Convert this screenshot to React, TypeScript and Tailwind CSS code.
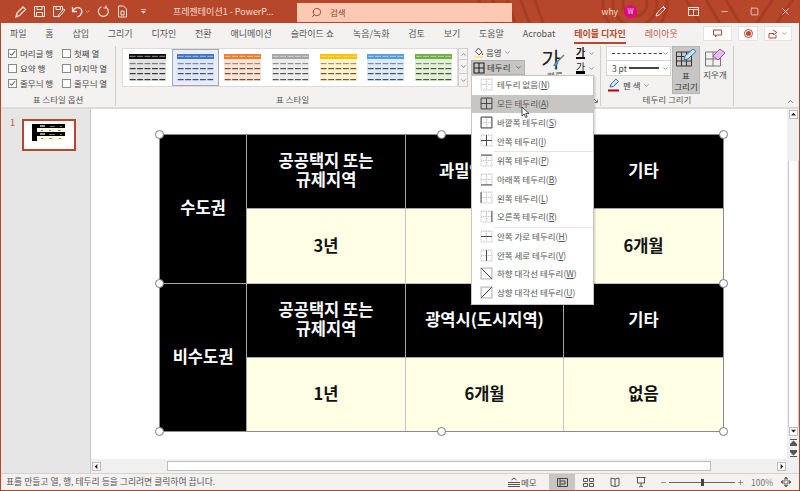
import React from "react";
import { ChevronDown, ChevronUp, Minus, Plus, Search, Square, X } from "lucide-react";

const FONT = "[font-family:'Noto_Sans_CJK_KR','Noto_Sans',sans-serif]";

const TABS = ["파일", "홈", "삽입", "그리기", "디자인", "전환", "애니메이션", "슬라이드 쇼", "녹음/녹화", "검토", "보기", "도움말", "Acrobat"];

const STYLES = [
  { head: "#111111", tint: "#e2e2e2", line: "#222222" },
  { head: "#4472c4", tint: "#dfe5f3", line: "#2f4266" },
  { head: "#ed7d31", tint: "#fbe3d4", line: "#5c4030" },
  { head: "#a5a5a5", tint: "#ededed", line: "#444444" },
  { head: "#ffc000", tint: "#fff2cc", line: "#55492a" },
  { head: "#5b9bd5", tint: "#deebf7", line: "#2d4256" },
  { head: "#70ad47", tint: "#e2efd9", line: "#35472a" },
];

// which edges are dark in each border menu icon
const MENU = [
  { label: "테두리 없음", key: "N", d: "" },
  { label: "모든 테두리", key: "A", d: "M1 1h10v10H1zM6 1v10M1 6h10", active: true },
  { label: "바깥쪽 테두리", key: "S", d: "M1 1h10v10H1z" },
  { label: "안쪽 테두리", key: "I", d: "M6 1v10M1 6h10", sep: true },
  { label: "위쪽 테두리", key: "P", d: "M1 1h10" },
  { label: "아래쪽 테두리", key: "B", d: "M1 11h10" },
  { label: "왼쪽 테두리", key: "L", d: "M1 1v10" },
  { label: "오른쪽 테두리", key: "R", d: "M11 1v10", sep: true },
  { label: "안쪽 가로 테두리", key: "H", d: "M1 6h10" },
  { label: "안쪽 세로 테두리", key: "V", d: "M6 1v10" },
  { label: "하향 대각선 테두리", key: "W", d: "M1 1l10 10", plain: true },
  { label: "상향 대각선 테두리", key: "U", d: "M1 11L11 1", plain: true },
];

const BorderIcon = ({ d, plain }: { d: string; plain?: boolean }) => (
  <svg width="13" height="13" viewBox="0 0 12 12" fill="none">
    {plain ? (
      <rect x="1" y="1" width="10" height="10" stroke="#b0b0b0" />
    ) : (
      <path d="M1 1h10v10H1zM6 1v10M1 6h10" stroke="#c4c4c4" strokeDasharray="1 0.6" />
    )}
    {d && <path d={d} stroke="#444444" strokeWidth="0.9" />}
  </svg>
);

const StylePreview = ({ head, tint, line }: { head: string; tint: string; line: string }) => (
  <svg width="37" height="27" viewBox="0 0 37 27">
    <rect width="37" height="27" fill={tint} />
    <rect width="37" height="5" fill={head} />
    {[0, 1, 2, 3, 4].map((c) => (
      <g key={c}>
        <rect x={c * 7.4 + 0.8} y="1.8" width="5.8" height="1.2" fill="#ffffff" opacity="0.45" />
        {[9, 14, 19, 25].map((y) => (
          <rect key={y} x={c * 7.4 + 0.8} y={y} width="5.8" height="1.2" fill={line} opacity={y === 9 ? 0.55 : 0.9} />
        ))}
      </g>
    ))}
  </svg>
);

const Check = ({ label, checked }: { label: string; checked?: boolean }) => (
  <div className="flex items-center gap-[3px] h-[15px]">
    <span className="w-[9px] h-[9px] bg-white border border-[#8a8a8a] flex items-center justify-center">
      {checked && (
        <svg width="7" height="7" viewBox="0 0 7 7" fill="none">
          <path d="M1 3.5l1.6 1.8L6 1.2" stroke="#333" />
        </svg>
      )}
    </span>
    <span className="whitespace-nowrap">{label}</span>
  </div>
);

const Group = ({ label, className, children }: { label?: string; className: string; children: React.ReactNode }) => (
  <div className={`flex flex-col shrink-0 border-r border-[#d0cfcd] my-[1px] ${className}`}>
    <div className="flex-1 min-h-0">{children}</div>
    {label && <div className="h-[13px] leading-[12px] text-center whitespace-nowrap text-[#555]">{label}</div>}
  </div>
);

const Caret = () => <ChevronDown size={7} strokeWidth={2} className="text-[#555] shrink-0" />;

const Handle = ({ className }: { className: string }) => (
  <span className={`absolute w-[9px] h-[9px] rounded-full bg-white border-[1.5px] border-[#7a7a7a] ${className}`} />
);

const HeadCell = ({ children, className = "" }: { children: React.ReactNode; className?: string }) => (
  <div className={`bg-black text-white flex items-center justify-center text-center pb-[3px] border-[#a6a6a6] ${className}`}>
    <span>{children}</span>
  </div>
);

const BodyCell = ({ children, className = "" }: { children: React.ReactNode; className?: string }) => (
  <div className={`bg-[#ffffe5] text-[#111] flex items-center justify-center pb-[2px] border-[#c4c4c4] ${className}`}>{children}</div>
);

const Scroll = ({ dir }: { dir: "up" | "down" | "left" | "right" }) => {
  const pts = { up: "1,5 4,2 7,5", down: "1,2 4,5 7,2", left: "5,1 2,4 5,7", right: "3,1 6,4 3,7" }[dir];
  return (
    <span className="w-[9px] h-[9px] bg-white border border-[#bdbdbd] flex items-center justify-center shrink-0">
      <svg width="7" height="7" viewBox="0 0 8 8">
        <polygon points={pts} fill="#222" />
      </svg>
    </span>
  );
};

const MiniTable = () => (
  <div className="grid grid-cols-[5px_10px_9px_9px] grid-rows-[4px_4px_4px_5px] w-[33px] h-[17px]">
    <div className="bg-black row-span-2" />
    <div className="bg-black col-span-3 flex items-center justify-around px-[1px]">
      <span className="w-[5px] h-[2px] bg-[#999]" />
      <span className="w-[5px] h-[1px] bg-[#777]" />
      <span className="w-[2px] h-[1px] bg-[#777]" />
    </div>
    <div className="bg-[#ffffe5] col-span-3 flex items-center justify-around px-[1px]">
      <span className="w-[2px] h-[1px] bg-[#888]" />
      <span className="w-[2px] h-[1px] bg-[#888]" />
      <span className="w-[3px] h-[1px] bg-[#888]" />
    </div>
    <div className="bg-black row-span-2" />
    <div className="bg-black col-span-3 flex items-center justify-around px-[1px]">
      <span className="w-[5px] h-[2px] bg-[#999]" />
      <span className="w-[6px] h-[1px] bg-[#777]" />
      <span className="w-[2px] h-[1px] bg-[#777]" />
    </div>
    <div className="bg-[#ffffe5] col-span-3 flex items-center justify-around px-[1px]">
      <span className="w-[2px] h-[1px] bg-[#888]" />
      <span className="w-[3px] h-[1px] bg-[#888]" />
      <span className="w-[2px] h-[1px] bg-[#888]" />
    </div>
  </div>
);

export default function App() {
  return (
    <div className={`${FONT} relative w-[800px] h-[491px] overflow-hidden bg-[#b7472a] flex flex-col text-[8.5px] text-[#444]`}>
      {/* title bar */}
      <div className="relative h-[23px] shrink-0 flex items-center text-white overflow-hidden">
        <svg className="absolute right-0 top-0" width="330" height="23" viewBox="0 0 330 23" fill="none" stroke="#a63d22" strokeWidth="3">
          <path d="M8 -2l10 27M22 -2l10 27M36 -2l10 27M50 -2l10 27M64 -2l10 27" />
          <circle cx="165" cy="4" r="12" />
          <circle cx="165" cy="4" r="22" />
          <circle cx="165" cy="4" r="32" />
          <path d="M215 -2l16 27M235 -2l16 27M255 -2l16 27M285 26l20 -30M305 26l20 -30" />
        </svg>
        <div className="relative flex items-center pl-[14px] text-[#fbe3da]">
          <svg width="13" height="14" viewBox="0 0 13 14" fill="none" stroke="currentColor" className="mr-[6px]">
            <path d="M2 12l1-4 6-6 2.500 2.500-6 6zM2 12l3-1.500" strokeWidth="1.300" />
          </svg>
          <svg width="13" height="13" viewBox="0 0 13 13" fill="none" stroke="currentColor" className="mr-[6px]">
            <path d="M1.500 1.500h10v10h-10zM4 1.500v3h5v-3M3.500 11.500v-4h6v4" />
          </svg>
          <svg width="14" height="13" viewBox="0 0 14 13" fill="none" stroke="currentColor" className="mr-[5px]">
            <path d="M6 11.500H1.500v-10h9v4M4 1.500v3h4.500v-3M13 5l-5 6-2 1 .5-2 5-6z" />
          </svg>
          <svg width="12" height="13" viewBox="0 0 12 13" fill="none" stroke="currentColor" strokeWidth="1.300" className="mr-[1px]">
            <path d="M1.500 2v4.500H6M1.500 6.500C3 3 7 1.500 9.500 3.500s1.500 6.500-3 8.500" />
          </svg>
          <ChevronDown size={7} className="mr-[6px]" />
          <svg width="13" height="13" viewBox="0 0 13 13" fill="none" stroke="currentColor" strokeWidth="1.200" className="mr-[7px]">
            <path d="M9 2.200A5 5 0 1 1 4.500 1.800M9 .5v2.500H6.500" />
          </svg>
          <svg width="11" height="13" viewBox="0 0 11 13" fill="none" stroke="currentColor" className="mr-[12px]">
            <path d="M1.500 12V1h5l3 3v8zM4 6h3v4H4z" />
          </svg>
          <svg width="7" height="7" viewBox="0 0 7 7" fill="currentColor">
            <path d="M1 1h5v.8H1zM1 3h5L3.500 5.600z" />
          </svg>
        </div>
        <div className="relative ml-[26px] w-[108px] whitespace-nowrap text-[9px] text-[#f6dcd2]">프레젠테이션1 - PowerP...</div>
        <div className="relative ml-[16px] w-[215px] h-[19px] mt-[1px] bg-[#fdc9b3] flex items-center pl-[14px] text-[#8a4a35]">
          <Search size={11} className="mr-[8px] -scale-x-100" />
          <span>검색</span>
        </div>
        <div className="relative ml-auto flex items-center pr-[9px] text-[#fbe3da]">
          <span className="mr-[6px] text-[8.500px]">why</span>
          <span className="w-[13px] h-[13px] rounded-full bg-[#e3008c] text-[7px] flex items-center justify-center mr-[17px]">W</span>
          <svg width="13" height="13" viewBox="0 0 13 13" fill="none" stroke="currentColor" className="mr-[21px]">
            <path d="M2 11l1-3 6-6 2 2-6 6zM9 1l3 3" />
          </svg>
          <svg width="11" height="9" viewBox="0 0 11 9" fill="none" stroke="currentColor" className="mr-[21px]">
            <path d="M.5.500h10v8H.5zM.5 2.500h10M5.500 2.500v6" />
          </svg>
          <Minus size={9} className="mr-[21px]" />
          <Square size={9} className="mr-[21px]" />
          <X size={11} />
        </div>
      </div>

      {/* ribbon tabs */}
      <div className="mx-[1px] h-[22px] shrink-0 bg-[#f3f2f1] flex items-center pl-[9px] pr-[7px] pb-px text-[#555] relative">
        <div className="flex items-center gap-[18.800px] text-[9px] whitespace-nowrap">
          {TABS.map((t) => (
            <span key={t}>{t}</span>
          ))}
          <span className="relative font-bold text-[#b7472a]">
            테이블 디자인
            <span className="absolute left-0 right-0 -bottom-[4px] h-[2px] bg-[#b7472a]" />
          </span>
          <span className="text-[#c0563c]">레이아웃</span>
        </div>
        <div className="ml-auto flex items-center gap-[6px]">
          <span className="w-[29px] h-[15px] bg-white border border-[#e4e3e1] flex items-center justify-center">
            <svg width="9" height="9" viewBox="0 0 9 9" fill="none" stroke="#b7472a">
              <path d="M.5 1h8v5H4L2.500 8V6h-2z" />
            </svg>
          </span>
          <span className="w-[20px] h-[15px] bg-white border border-[#e4e3e1] flex items-center justify-center">
            <span className="w-[9px] h-[9px] rounded-full border border-[#b7472a] flex items-center justify-center">
              <span className="w-[5px] h-[5px] rounded-full bg-[#c8472a]" />
            </span>
          </span>
          <span className="w-[28px] h-[15px] bg-white border border-[#e4e3e1] flex items-center justify-center gap-[3px]">
            <svg width="10" height="10" viewBox="0 0 10 10" fill="none" stroke="#b7472a">
              <path d="M1 9V4.500h5M1 9h7V6M5 1l4 2.500L5 6" />
            </svg>
            <ChevronDown size={7} className="text-[#b7472a]" />
          </span>
        </div>
      </div>

      {/* ribbon */}
      <div className="mx-[1px] h-[64px] shrink-0 bg-[#f3f2f1] border-b-[2px] border-[#dcdbd9] flex pr-[4px]">
        <Group label="표 스타일 옵션" className="w-[115px]">
          <div className="grid grid-cols-[54px_auto] pl-[7px]">
            <Check label="머리글 행" checked />
            <Check label="첫째 열" />
            <Check label="요약 행" />
            <Check label="마지막 열" />
            <Check label="줄무늬 행" checked />
            <Check label="줄무늬 열" />
          </div>
        </Group>

        <div className="w-[353px] shrink-0 flex flex-col my-[1px]">
          <div className="flex-1 flex pl-[6px] pt-[2px]">
            <div className="w-[336px] h-[39px] bg-white border border-[#dcdbd9] flex items-center pl-[1px]">
              {STYLES.map((s, i) => (
                <div
                  key={s.head}
                  className={`w-[47.700px] h-[37px] flex items-center justify-center ${i === 1 ? "border-[1.500px] border-[#a8a8a8] bg-[#e8edf8]" : ""}`}
                >
                  <StylePreview {...s} />
                </div>
              ))}
            </div>
            <div className="w-[10px] h-[39px] flex flex-col">
              <span className="h-[12px] border border-[#d0cfcd] flex items-center justify-center">
                <ChevronUp size={7} />
              </span>
              <span className="h-[14px] border border-t-0 border-[#d0cfcd] flex items-center justify-center">
                <ChevronDown size={7} />
              </span>
              <span className="h-[13px] border border-t-0 border-[#d0cfcd] flex items-center justify-center">
                <ChevronDown size={7} />
              </span>
            </div>
          </div>
          <div className="h-[13px] leading-[12px] text-center text-[#555]">표 스타일</div>
        </div>

        <Group className="w-[132px] relative">
          <div className="flex pl-[2px]">
            <div className="w-[54px] flex flex-col shrink-0">
              <div className="h-[14px] flex items-center gap-[2px] pl-[2px] pb-[2px]">
                <svg width="11" height="11" viewBox="0 0 11 11" fill="none">
                  <path d="M5.500 1l3.500 4-3 3-3.500-3.500zM9.500 6.500v1.500" stroke="#555" />
                  <path d="M1 10h9" stroke="#f7e27a" strokeWidth="1.500" />
                </svg>
                <span>음영</span>
                <Caret />
              </div>
              <div className="h-[15px] bg-[#c8c6c4] border border-[#b5b3b1] flex items-center gap-[2px] pl-[1px] text-[#333]">
                <svg width="12" height="12" viewBox="0 0 12 12" fill="none" stroke="#222" strokeWidth="1.100" className="shrink-0">
                  <path d="M1 1h10v10H1zM6 1v10M1 6h10" />
                </svg>
                <span className="whitespace-nowrap">테두리</span>
                <ChevronDown size={7} className="ml-auto mr-[2px] shrink-0" />
              </div>
            </div>
            <div className="relative w-[30px] ml-[15px] flex flex-col items-center">
              <span className="text-[21px] leading-[22px] text-[#222] -ml-[8px] mt-[1px]">가</span>
              <svg width="14" height="14" viewBox="0 0 14 14" className="absolute left-[11px] top-[8px]" fill="none">
                <path d="M13 1L6 8" stroke="#777" strokeWidth="1.500" />
                <path d="M6.500 7.500C4 8 3 10 2 12c2.500 0 4.500-.5 5.500-3z" fill="#3f8fd8" />
              </svg>
              <span className="leading-[11px] mt-[1px]">빠른</span>
            </div>
            <div className="flex flex-col ml-[6px] pt-[1px] gap-[3px]">
              <div className="flex items-center gap-[3px]">
                <span className="text-[10px] leading-[10px] font-bold text-[#222] border-b-[2px] border-black">가</span>
                <Caret />
              </div>
              <div className="flex items-center gap-[3px]">
                <span className="text-[10px] leading-[9px] text-[#222] border-b-[3px] border-black">가</span>
                <Caret />
              </div>
            </div>
          </div>
          <svg width="7" height="7" viewBox="0 0 7 7" fill="none" stroke="#777" className="absolute right-[2px] bottom-[3px]">
            <path d="M.5 3V.5H3M2 2l4 4M6.500 3.500v3h-3" />
          </svg>
        </Group>

        <Group label="테두리 그리기" className="w-[133px]">
          <div className="flex pl-[5px]">
            <div className="w-[65px]">
              <div className="h-[15px] bg-white border border-[#d8d7d5] flex items-center pl-[5px]">
                <span className="w-[50px] border-t-[1.500px] border-dashed border-[#444]" />
                <ChevronDown size={7} className="ml-auto mr-[1px]" />
              </div>
              <div className="h-[15px] bg-white border border-t-0 border-[#d8d7d5] flex items-center pl-[5px] gap-[2px]">
                <span className="whitespace-nowrap">3 pt</span>
                <span className="w-[30px] h-[2px] bg-[#444]" />
                <ChevronDown size={7} className="ml-auto mr-[1px]" />
              </div>
              <div className="h-[16px] flex items-center pl-[2px] gap-[2px] mt-[1px]">
                <svg width="12" height="14" viewBox="0 0 12 14" fill="none">
                  <path d="M2 9l1-3 5-5 2.500 2.500-5 5z" fill="#cfe3f7" stroke="#2e75b6" />
                  <path d="M0 12.500h11" stroke="#c00000" strokeWidth="2" />
                </svg>
                <span className="ml-[1px]">펜 색</span>
                <Caret />
              </div>
            </div>
            <div className="w-[28px] h-[48px] ml-[1px] bg-[#c8c6c4] border border-[#b8b6b4] flex flex-col items-center text-[#333]">
              <svg width="22" height="20" viewBox="0 0 22 20" fill="none" className="mt-[1px]">
                <path d="M1.500 4h15v14h-15zM1.500 8.500h15M1.500 13h15M6.500 4v14M11.500 4v14" stroke="#333" />
                <path d="M9 11.500l1-3.500 8-7 3 2.500-8 7.500z" fill="#cfe3f7" stroke="#2e75b6" />
              </svg>
              <span className="leading-[11px] mt-[2px]">표</span>
              <span className="leading-[11px]">그리기</span>
            </div>
            <div className="w-[28px] flex flex-col items-center pl-[2px]">
              <svg width="22" height="20" viewBox="0 0 22 20" fill="none" className="mt-[2px]">
                <path d="M1.500 4h15v14h-15zM1.500 11h15M9 4v14" stroke="#777" />
                <path d="M9 8l7-7 5 4-7 7z" fill="#e4bce8" stroke="#a64dae" />
              </svg>
              <span className="leading-[11px] mt-[1px] whitespace-nowrap">지우개</span>
            </div>
          </div>
        </Group>

        <div className="flex-1 flex items-end justify-end pb-[1px]">
          <ChevronUp size={9} className="text-[#555]" />
        </div>
      </div>

      {/* work area */}
      <div className="mx-[1px] flex-1 min-h-0 flex bg-white">
        <div className="w-[90px] shrink-0 bg-[#e6e6e6] border-r border-[#c8c8c8] flex items-start pl-[9px] pt-[10px] gap-[7px]">
          <span className="text-[9px] leading-[12px] -mt-[2px] text-[#c0563c]">1</span>
          <div className="w-[54px] h-[32px] bg-white border-[2px] border-[#b7472a] pl-[8px] pt-[3px]">
            <MiniTable />
          </div>
        </div>

        <div className="flex-1 min-w-0 flex flex-col">
          <div className="flex-1 min-h-0 flex">
            <div className="flex-1 min-w-0 pl-[68px] pt-[25px]">
              <div className="relative w-[565px] h-[298px] border border-[#8a8a8a] grid grid-cols-[87px_159px_158px_159px] grid-rows-[74px_75px_74px_73px] text-[16.500px] leading-[19px] font-bold [font-family:'Noto_Sans_CJK_KR',sans-serif]">
                <HeadCell className="row-span-2 border-r border-b">수도권</HeadCell>
                <HeadCell className="border-r border-b">
                  공공택지 또는
                  <br />
                  규제지역
                </HeadCell>
                <HeadCell className="border-r border-b">과밀억제권역</HeadCell>
                <HeadCell className="border-b">기타</HeadCell>
                <BodyCell className="border-r border-b">3년</BodyCell>
                <BodyCell className="border-r border-b">1년</BodyCell>
                <BodyCell className="border-b">6개월</BodyCell>
                <HeadCell className="row-span-2 border-r">비수도권</HeadCell>
                <HeadCell className="border-r border-b">
                  공공택지 또는
                  <br />
                  규제지역
                </HeadCell>
                <HeadCell className="border-r border-b">광역시(도시지역)</HeadCell>
                <HeadCell className="border-b">기타</HeadCell>
                <BodyCell className="border-r">1년</BodyCell>
                <BodyCell className="border-r">6개월</BodyCell>
                <BodyCell>없음</BodyCell>
                <Handle className="-left-[5px] -top-[5px]" />
                <Handle className="left-[277px] -top-[5px]" />
                <Handle className="-right-[5px] -top-[5px]" />
                <Handle className="-left-[5px] top-[144px]" />
                <Handle className="-right-[5px] top-[144px]" />
                <Handle className="-left-[5px] -bottom-[5px]" />
                <Handle className="left-[277px] -bottom-[5px]" />
                <Handle className="-right-[5px] -bottom-[5px]" />
              </div>
            </div>
            <div className="w-[12px] shrink-0 bg-[#f0f0f0] flex flex-col items-center pt-[1px]">
              <Scroll dir="up" />
              <div className="w-[11px] bg-white border-x border-[#c8c8c8] mt-[42px] h-[267px]" />
              <div className="mt-auto flex flex-col items-center">
                <Scroll dir="down" />
                <svg width="9" height="9" viewBox="0 0 9 9" fill="#555" className="mt-[2px]">
                  <path d="M1 1h7v1H1zM4.500 2.500L8 6v2H1V6z" />
                </svg>
                <svg width="9" height="9" viewBox="0 0 9 9" fill="#555" className="mt-[2px] mb-[1px]">
                  <path d="M1 1h7v2L4.500 6.500 1 3zM1 7h7v1H1z" />
                </svg>
              </div>
            </div>
          </div>
          <div className="h-[14px] shrink-0 bg-[#f0f0f0] flex items-center pl-[1px] pr-[12px]">
            <Scroll dir="left" />
            <div className="ml-[66px] w-[544px] h-[10px] bg-white border border-[#bdbdbd]" />
            <span className="ml-auto mr-[1px]">
              <Scroll dir="right" />
            </span>
          </div>
        </div>
      </div>

      {/* status bar */}
      <div className="mx-[1px] mb-[1px] h-[17px] shrink-0 bg-[#f3f2f1] border-t border-[#d4d3d1] flex items-center pl-[5px] text-[#555]">
        <span className="whitespace-nowrap text-[8.800px]">표를 만들고 열, 행, 테두리 등을 그리려면 클릭하여 끕니다.</span>
        <div className="ml-auto flex items-center h-full pr-[8px]">
          <svg width="12" height="10" viewBox="0 0 12 10" fill="none" stroke="#555" className="mr-[1px]">
            <path d="M3.500 3L6 1l2.500 2M0 5.500h12M0 7.500h12M0 9.500h12" />
          </svg>
          <span className="w-[28px]">메모</span>
          <span className="w-[26px] h-full bg-[#c8c6c4] flex items-center justify-center">
            <svg width="11" height="9" viewBox="0 0 11 9" fill="none" stroke="#444">
              <path d="M.5.500h10v8H.5zM3 .5v8M3 3h5v3H3" />
            </svg>
          </span>
          <span className="w-[26px] flex items-center justify-center">
            <svg width="11" height="9" viewBox="0 0 11 9" fill="none" stroke="#555">
              <path d="M.5.500h4v3h-4zM6.500.500h4v3h-4zM.5 5.500h4v3h-4zM6.500 5.500h4v3h-4z" />
            </svg>
          </span>
          <span className="w-[27px] flex items-center justify-center">
            <svg width="10" height="10" viewBox="0 0 10 10" fill="none" stroke="#555">
              <path d="M5 2L1 1v7.500L5 9.500l4-1V1zM5 2v7.500" />
            </svg>
          </span>
          <span className="w-[26px] flex items-center justify-center">
            <svg width="10" height="11" viewBox="0 0 10 11" fill="none" stroke="#555">
              <path d="M.5.500h9M1.500.500v5.500h7V.500M5 6v3M3 10l2-1 2 1" />
            </svg>
          </span>
          <Minus size={7} className="text-[#555] ml-[6px]" />
          <div className="relative w-[66px] h-px bg-[#666] mx-[2px]">
            <span className="absolute left-[32px] -top-[3px] w-[3px] h-[7px] bg-[#444]" />
          </div>
          <Plus size={7} className="text-[#555]" />
          <span className="ml-[7px] text-[#777]">100%</span>
          <svg width="10" height="10" viewBox="0 0 10 10" fill="none" stroke="#666" className="ml-[8px]">
            <path d="M3 3h4v4H3zM5 0L3.500 1.500h3zM5 10L3.500 8.500h3zM0 5l1.500-1.500v3zM10 5L8.500 3.500v3z" />
          </svg>
        </div>
      </div>

      {/* open border menu */}
      <div className="absolute left-[471px] top-[75px] w-[123px] h-[230px] bg-white border border-[#c8c6c4] shadow-[1px_1px_2px_rgba(0,0,0,0.2)] text-[#555]">
        {MENU.map((m) => (
          <React.Fragment key={m.key}>
            <div className={`h-[18.700px] flex items-center pl-[3px] pb-px ${m.active ? "bg-[#c8c6c4]" : ""}`}>
              <span className="w-[22px] flex items-center justify-center">
                <BorderIcon d={m.d} plain={m.plain} />
              </span>
              <span className="whitespace-nowrap">
                {m.label}(<u>{m.key}</u>)
              </span>
            </div>
            {m.sep && <div className="h-px bg-[#e6e5e3] ml-[22px]" />}
          </React.Fragment>
        ))}
      </div>

      {/* mouse pointer */}
      <svg width="9" height="13" viewBox="0 0 9 13" className="absolute left-[521px] top-[106px]">
        <path d="M1 1v9l2.200-2 1.500 3.500 1.500-.6L4.700 7.500H8z" fill="#fff" stroke="#222" strokeWidth="0.800" />
      </svg>
    </div>
  );
}
